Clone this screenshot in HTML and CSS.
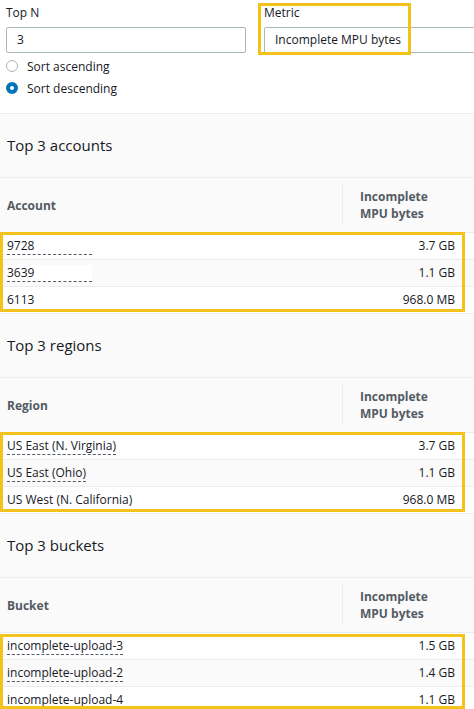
FILE: index.html
```html
<!DOCTYPE html>
<html>
<head>
<meta charset="utf-8">
<link rel="stylesheet" href="styles.css">
</head>
<body>
<div class="page">
  <div class="controls">
    <div class="field">
      <div class="label">Top N</div>
      <div class="input">3</div>
      <div class="radios">
        <div class="radio-row"><span class="radio"></span><span>Sort ascending</span></div>
        <div class="radio-row"><span class="radio checked"></span><span>Sort descending</span></div>
      </div>
    </div>
    <div class="field metric">
      <div class="label">Metric</div>
      <div class="input">Incomplete MPU bytes</div>
    </div>
    <div class="highlight metric-hl"></div>
  </div>

  <section class="section">
    <div class="heading">Top 3 accounts</div>
    <div class="table">
      <div class="thead">
        <div class="th">Account</div>
        <div class="th th-num">Incomplete<br>MPU bytes</div>
      </div>
      <div class="tbody">
        <div class="tr"><div class="td"><span class="link acct">9728</span></div><div class="td num">3.7 GB</div></div>
        <div class="tr"><div class="td"><span class="link acct redact">3639</span></div><div class="td num">1.1 GB</div></div>
        <div class="tr"><div class="td">6113</div><div class="td num">968.0 MB</div></div>
        <div class="highlight rows-hl"></div>
      </div>
    </div>
  </section>

  <section class="section">
    <div class="heading">Top 3 regions</div>
    <div class="table">
      <div class="thead">
        <div class="th">Region</div>
        <div class="th th-num">Incomplete<br>MPU bytes</div>
      </div>
      <div class="tbody">
        <div class="tr"><div class="td"><span class="link">US East (N. Virginia)</span></div><div class="td num">3.7 GB</div></div>
        <div class="tr"><div class="td"><span class="link">US East (Ohio)</span></div><div class="td num">1.1 GB</div></div>
        <div class="tr"><div class="td">US West (N. California)</div><div class="td num">968.0 MB</div></div>
        <div class="highlight rows-hl"></div>
      </div>
    </div>
  </section>

  <section class="section">
    <div class="heading">Top 3 buckets</div>
    <div class="table">
      <div class="thead">
        <div class="th">Bucket</div>
        <div class="th th-num">Incomplete<br>MPU bytes</div>
      </div>
      <div class="tbody">
        <div class="tr"><div class="td"><span class="link">incomplete-upload-3</span></div><div class="td num">1.5 GB</div></div>
        <div class="tr"><div class="td"><span class="link">incomplete-upload-2</span></div><div class="td num">1.4 GB</div></div>
        <div class="tr"><div class="td"><span class="link">incomplete-upload-4</span></div><div class="td num">1.1 GB</div></div>
        <div class="highlight rows-hl bottom-hl"></div>
      </div>
    </div>
  </section>
</div>
</body>
</html>
```

FILE: styles.css
```css
html, body {
  margin: 0;
  padding: 0;
  overflow: hidden;
  background: #ffffff;
}
body {
  font-family: "Open Sans", "Noto Sans", sans-serif;
  font-size: 12px;
  color: #16191f;
}
.page {
  width: 474px;
}
.controls {
  position: relative;
  height: 113px;
  padding: 4px 0 0 6px;
  box-sizing: border-box;
  display: grid;
  grid-template-columns: 240px 214px;
  column-gap: 18px;
  align-items: start;
}
.label {
  line-height: 18px;
  height: 18px;
  margin-bottom: 5px;
}
.input {
  height: 26px;
  box-sizing: border-box;
  border: 1px solid #aab7b8;
  border-radius: 2px;
  padding: 0 10px;
  line-height: 24px;
  background: #fff;
}
.radios {
  margin-top: 2px;
}
.radio-row {
  display: flex;
  align-items: center;
  height: 22px;
  gap: 9px;
}
.radio {
  width: 12px;
  height: 12px;
  box-sizing: border-box;
  border-radius: 50%;
  border: 1.5px solid #aab7b8;
  background: #fff;
}
.radio.checked {
  border: 4px solid #0073bb;
}
.highlight {
  position: absolute;
  box-sizing: border-box;
  border: 3px solid #f3c31a;
  pointer-events: none;
}
.metric-hl {
  left: 258px;
  top: 3px;
  width: 153px;
  height: 52px;
}
.section {
  background: #fafafa;
  border-top: 1px solid #eaeded;
}
.heading {
  height: 63px;
  box-sizing: border-box;
  padding-bottom: 2px;
  display: flex;
  align-items: center;
  padding-left: 7px;
  font-size: 15px;
  color: #16191f;
}
.thead {
  display: grid;
  grid-template-columns: 342px 1fr;
  border-top: 1px solid #eaeded;
  height: 55px;
  box-sizing: border-box;
  align-items: center;
}
.th {
  font-weight: 700;
  color: #545b64;
  padding-left: 7px;
}
.th-num {
  position: relative;
  padding-left: 18px;
  line-height: 17px;
}
.th-num::before {
  content: "";
  position: absolute;
  left: 0;
  top: -3px;
  bottom: -3px;
  border-left: 1px solid #eaeded;
}
.tbody {
  position: relative;
}
.tr {
  display: grid;
  grid-template-columns: 342px 1fr;
  height: 27px;
  box-sizing: border-box;
  border-top: 1px solid #eaeded;
  align-items: center;
  background: #ffffff;
}
.tr:nth-child(2) {
  background: #fafafa;
}
.td {
  padding-left: 7px;
  line-height: 16px;
}
.td.num {
  text-align: right;
  padding-right: 19px;
}
.link {
  display: inline-block;
  line-height: 16px;
  border-bottom: 1px dashed #545b64;
}
.link.acct {
  width: 85px;
}
.link.redact {
  background: #ffffff;
  width: 85px;
}
.rows-hl {
  left: 0;
  top: 0;
  width: 465px;
  height: 80px;
}
.bottom-hl {
  top: 2px;
  height: 75px;
}
```
